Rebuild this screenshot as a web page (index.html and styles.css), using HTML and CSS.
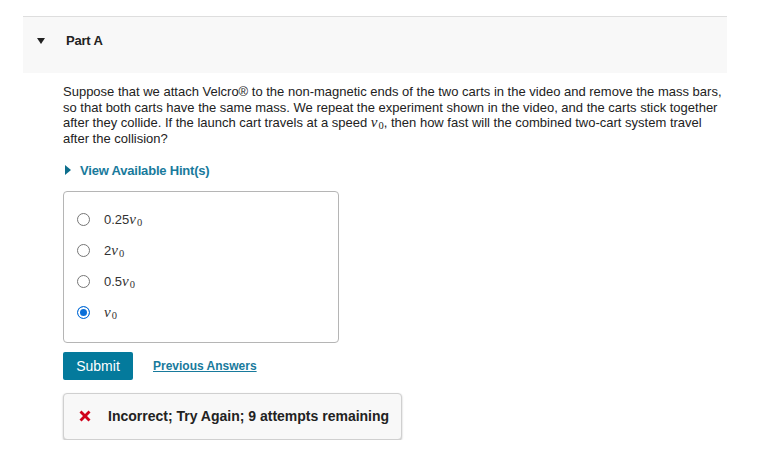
FILE: index.html
```html
<!DOCTYPE html>
<html>
<head>
<meta charset="utf-8">
<link rel="stylesheet" href="styles.css">
</head>
<body>
<div class="page">
  <div class="part-header">
    <span class="caret-down"></span>
    <span class="part-title">Part A</span>
  </div>
  <div class="part-body">
    <p class="question">Suppose that we attach Velcro® to the non-magnetic ends of the two carts in the video and remove the mass bars, so that both carts have the same mass. We repeat the experiment shown in the video, and the carts stick together after they collide. If the launch cart travels at a speed <span class="math"><i>v</i><sub>0</sub></span>, then how fast will the combined two-cart system travel after the collision?</p>
    <div class="hint"><span class="caret-right"></span><span class="hint-text">View Available Hint(s)</span></div>
    <div class="choices">
      <label class="choice"><span class="radio"></span><span class="label">0.25<span class="math"><i>v</i><sub>0</sub></span></span></label>
      <label class="choice"><span class="radio"></span><span class="label">2<span class="math"><i>v</i><sub>0</sub></span></span></label>
      <label class="choice"><span class="radio"></span><span class="label">0.5<span class="math"><i>v</i><sub>0</sub></span></span></label>
      <label class="choice"><span class="radio checked"></span><span class="label"><span class="math"><i>v</i><sub>0</sub></span></span></label>
    </div>
    <div class="actions">
      <button class="submit">Submit</button>
      <a class="prev" href="#">Previous Answers</a>
    </div>
    <div class="feedback">
      <svg class="xicon" width="12" height="12" viewBox="0 0 12 12"><path d="M0.5 2.5 L2.5 0.5 L6 4 L9.5 0.5 L11.5 2.5 L8 6 L11.5 9.5 L9.5 11.5 L6 8 L2.5 11.5 L0.5 9.5 L4 6 Z" fill="#d0021b"/></svg>
      <span class="fb-text">Incorrect; Try Again; 9 attempts remaining</span>
    </div>
  </div>
</div>
</body>
</html>
```
FILE: styles.css
```css
html, body { margin: 0; padding: 0; background: #fff; }
body { font-family: "Liberation Sans", Arial, sans-serif; color: #222; }
.page { padding: 16px 41px 0 23px; }
.part-header {
  height: 47px;
  border-top: 1px solid #dedede;
  background: #f8f8f8;
  display: flex;
  align-items: center;
  padding-left: 14px;
  padding-bottom: 9px;
  box-sizing: content-box;
}
.caret-down {
  width: 0; height: 0;
  border-left: 4px solid transparent;
  border-right: 4px solid transparent;
  border-top: 6px solid #222;
  margin-right: 21px;
}
.part-title { font-weight: bold; font-size: 13px; color: #222; letter-spacing: -0.2px; }
.part-body { padding: 11px 0 0 40px; }
.question {
  margin: 0;
  font-size: 13px;
  line-height: 15.7px;
  color: #222;
}
.math { font-family: "Liberation Serif", "Times New Roman", serif; font-size: 15px; line-height: 1; }
.math i { font-style: italic; padding-right: 1px; }
.math sub { font-style: normal; font-size: 10.5px; vertical-align: -2px; line-height: 0; }
.hint { display: flex; align-items: center; margin-top: 16px; }
.caret-right {
  width: 0; height: 0;
  border-top: 5px solid transparent;
  border-bottom: 5px solid transparent;
  border-left: 6px solid #0d6e8c;
  margin-left: 2px;
  margin-right: 9px;
}
.hint-text { font-weight: bold; font-size: 13px; color: #187a9c; letter-spacing: -0.2px; }
.choices {
  margin-top: 13px;
  width: 276px;
  box-sizing: border-box;
  border: 1px solid #b5b5b5;
  border-radius: 4px;
  padding: 18px 0 20px 12px;
  display: flex;
  flex-direction: column;
  gap: 12px;
}
.choice { display: flex; align-items: center; height: 19px; }
.radio {
  width: 11px; height: 11px;
  border: 1px solid #767676;
  border-radius: 50%;
  margin-left: 1px;
  margin-right: 14px;
  box-sizing: content-box;
}
.radio.checked {
  border: 1px solid #0b6fd8;
  background: #0b6fd8;
  box-shadow: inset 0 0 0 2px #fff;
}
.label { font-size: 13px; color: #333; }
.actions { display: flex; align-items: center; margin-top: 9px; }
.submit {
  background: #047a9c;
  color: #fff;
  border: none;
  border-radius: 2px;
  font-family: "Liberation Sans", Arial, sans-serif;
  font-size: 14px;
  width: 70px;
  height: 28px;
  padding: 0;
}
.prev {
  margin-left: 20px;
  font-size: 12px;
  font-weight: bold;
  color: #187a9c;
  text-decoration: underline;
}
.feedback {
  margin-top: 13px;
  width: 339px;
  height: 47px;
  box-sizing: border-box;
  background: #f8f8f8;
  border: 1px solid #d0d0d0;
  border-radius: 4px;
  box-shadow: 0 1px 2px rgba(0,0,0,0.25);
  display: flex;
  align-items: center;
  padding-left: 15px;
}
.xicon { margin-right: 17px; }
.fb-text { font-weight: bold; font-size: 14px; color: #222; }
```
